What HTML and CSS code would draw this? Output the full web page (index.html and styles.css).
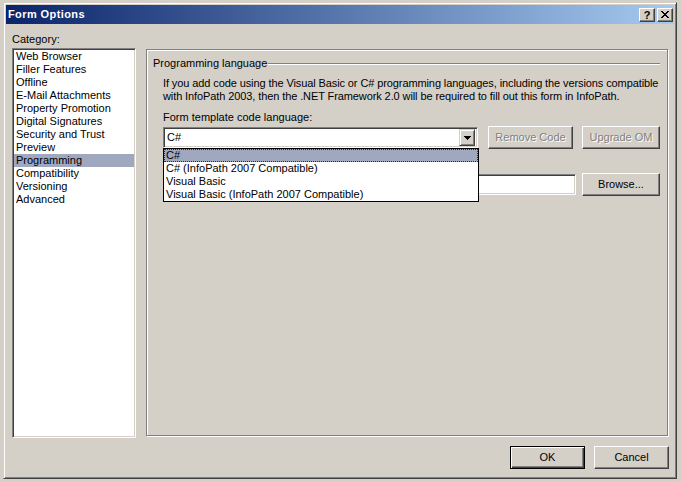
FILE: index.html
```html
<!DOCTYPE html>
<html>
<head>
<meta charset="utf-8">
<title>Form Options</title>
<link rel="stylesheet" href="styles.css">
</head>
<body>
<div class="window">
  <div class="titlebar">
    <span class="title">Form Options</span>
    <div class="tbtns">
      <span class="tbtn help">?</span>
      <span class="tbtn close"><svg width="8" height="7" viewBox="0 0 8 7"><path d="M0 0h2v1h1v1h2v-1h1v-1h2v1h-1v1h-1v1h-1v1h1v1h1v1h1v1h-2v-1h-1v-1h-2v1h-1v1h-2v-1h1v-1h1v-1h1v-1h-1v-1h-1v-1h-1z" fill="#000"/></svg></span>
    </div>
  </div>
  <div class="client">
    <div class="main">
      <div class="left">
        <div class="label">Category:</div>
        <ul class="listbox">
          <li>Web Browser</li>
          <li>Filler Features</li>
          <li>Offline</li>
          <li>E-Mail Attachments</li>
          <li>Property Promotion</li>
          <li>Digital Signatures</li>
          <li>Security and Trust</li>
          <li>Preview</li>
          <li class="sel">Programming</li>
          <li>Compatibility</li>
          <li>Versioning</li>
          <li>Advanced</li>
        </ul>
      </div>
      <div class="panel">
        <div class="group-head"><span class="group-title">Programming language</span><span class="rule"></span></div>
        <div class="indent">
          <p class="desc">If you add code using the Visual Basic or C# programming languages, including the versions compatible<br>with InfoPath 2003, then the .NET Framework 2.0 will be required to fill out this form in InfoPath.</p>
          <div class="field-label">Form template code language:</div>
          <div class="row row-lang">
            <div class="combo">
              <span class="combo-text">C#</span>
              <span class="drop-btn"><svg width="7" height="4" viewBox="0 0 7 4"><path d="M0 0h7v1h-1v1h-1v1h-1v1h-1v-1h-1v-1h-1v-1h-1z" fill="#000"/></svg></span>
              <ul class="dropdown">
                <li class="sel">C#</li>
                <li>C# (InfoPath 2007 Compatible)</li>
                <li>Visual Basic</li>
                <li>Visual Basic (InfoPath 2007 Compatible)</li>
              </ul>
            </div>
            <span class="btn btn-remove disabled">Remove Code</span>
            <span class="btn btn-upgrade disabled">Upgrade OM</span>
          </div>
          <div class="row row-path">
            <div class="textbox"></div>
            <span class="btn btn-browse">Browse...</span>
          </div>
        </div>
      </div>
    </div>
    <div class="footer">
      <span class="btn btn-dlg default">OK</span>
      <span class="btn btn-dlg">Cancel</span>
    </div>
  </div>
</div>
</body>
</html>
```

FILE: styles.css
```css
* { box-sizing: border-box; }
html, body { margin: 0; padding: 0; }
body {
  width: 681px;
  height: 482px;
  overflow: hidden;
  background: #d4d0c8;
  font-family: "Liberation Sans", Arial, sans-serif;
  font-size: 11px;
  line-height: 13px;
  color: #000;
}
ul { list-style: none; margin: 0; padding: 0; }
p { margin: 0; }

.window {
  margin: 2px 0 0 3px;
  width: 674px;
  height: 477px;
  background: #d4d0c8;
  border: 1px solid;
  border-color: #d4d0c8 #404040 #404040 #d4d0c8;
  box-shadow: inset 1px 1px 0 #fff, inset -1px -1px 0 #808080;
  padding: 2px;
  display: flex;
  flex-direction: column;
}

.titlebar {
  height: 19px;
  flex: none;
  background: linear-gradient(to right, #0a246a, #a6caf0);
  display: flex;
  align-items: center;
  padding-left: 2px;
  padding-right: 1px;
}
.title {
  color: #fff;
  font-weight: bold;
  font-size: 11px;
  letter-spacing: 0.4px;
  flex: 1;
}
.tbtns { display: flex; gap: 2px; }
.tbtn {
  width: 16px;
  height: 14px;
  background: #d4d0c8;
  border: 1px solid;
  border-color: #fff #404040 #404040 #fff;
  box-shadow: inset -1px -1px 0 #808080;
  display: flex;
  align-items: center;
  justify-content: center;
  font-weight: bold;
  font-size: 11px;
  line-height: 12px;
}
.tbtn.close svg { display: block; margin-top: -1px; }

.client {
  flex: 1;
  padding: 9px 5px 0 6px;
  display: flex;
  flex-direction: column;
}
.main { display: flex; align-items: flex-start; height: 405px; flex: none; }
.left { width: 124px; flex: none; }
.label { height: 13px; margin-bottom: 2px; }

.listbox, .combo, .textbox {
  background: #fff;
  border: 1px solid;
  border-color: #808080 #fff #fff #808080;
  box-shadow: inset 1px 1px 0 #404040, inset -1px -1px 0 #d4d0c8;
}
.listbox {
  height: 390px;
  padding: 1px;
}
.listbox li {
  height: 13px;
  padding-left: 2px;
  white-space: nowrap;
}
.listbox li.sel { background: #a0a8c0; }

.panel {
  margin-left: 10px;
  margin-top: 16px;
  width: 522px;
  height: 387px;
  border: 1px solid #808080;
  box-shadow: 1px 1px 0 #fff, inset 1px 1px 0 #fff;
  padding: 7px 7px 0 6px;
}
.group-head { display: flex; align-items: center; height: 13px; }
.group-title { white-space: nowrap; }
.rule {
  flex: 1;
  height: 2px;
  border-top: 1px solid #808080;
  border-bottom: 1px solid #fff;
  margin-left: 1px;
}
.indent { padding-left: 10px; }
.desc { margin-top: 7px; white-space: nowrap; letter-spacing: -0.1px; }
.field-label { margin-top: 8px; }

.row { display: flex; align-items: center; }
.row-lang { margin-top: 2px; height: 23px; }
.row-path { margin-top: 24px; height: 23px; }

.combo {
  position: relative;
  width: 315px;
  height: 21px;
  padding: 2px;
  display: flex;
  align-items: center;
}
.combo-text { padding-left: 1px; flex: 1; }
.drop-btn {
  width: 16px;
  height: 17px;
  background: #d4d0c8;
  border: 1px solid;
  border-color: #d4d0c8 #404040 #404040 #d4d0c8;
  box-shadow: inset 1px 1px 0 #fff, inset -1px -1px 0 #808080;
  display: flex;
  align-items: center;
  justify-content: center;
}
.drop-btn svg { display: block; }
.dropdown {
  position: absolute;
  left: -1px;
  top: 20px;
  width: 316px;
  background: #fff;
  border: 1px solid #000;
  z-index: 5;
}
.dropdown li { height: 13px; padding-left: 2px; white-space: nowrap; }
.dropdown li.sel {
  background: #a0a8c0;
  outline: 1px dotted #2a2a40;
  outline-offset: -1px;
}

.btn {
  display: flex;
  align-items: center;
  justify-content: center;
  height: 23px;
  background: #d4d0c8;
  border: 1px solid;
  border-color: #fff #404040 #404040 #fff;
  box-shadow: inset -1px -1px 0 #808080;
  white-space: nowrap;
}
.btn.disabled { color: #808080; text-shadow: 1px 1px 0 #fff; }
.btn-remove { width: 85px; margin-left: 10px; }
.btn-upgrade { width: 78px; margin-left: 9px; }
.textbox { width: 413px; height: 21px; }
.btn-browse { width: 78px; margin-left: 6px; }

.footer {
  display: flex;
  justify-content: flex-end;
  gap: 9px;
  margin-top: 8px;
}
.btn-dlg { width: 75px; }
.btn.default {
  border: 1px solid #000;
  box-shadow: inset 1px 1px 0 #fff, inset -1px -1px 0 #404040, inset -2px -2px 0 #808080;
}
```
